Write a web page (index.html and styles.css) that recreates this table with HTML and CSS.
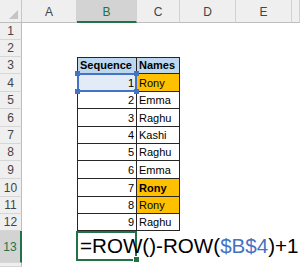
FILE: index.html
```html
<!DOCTYPE html>
<html>
<head>
<meta charset="utf-8">
<link rel="stylesheet" href="styles.css">
</head>
<body>
<div class="sheet">
  <div class="corner"><span class="tri"></span></div>
  <div class="ch">A</div><div class="ch sel">B</div><div class="ch">C</div><div class="ch">D</div><div class="ch">E</div><div class="ch"></div>

  <div class="rh">1</div><div></div><div></div><div></div><div></div><div></div><div></div>
  <div class="rh">2</div><div></div><div></div><div></div><div></div><div></div><div></div>
  <div class="rh">3</div><div></div><div class="t hd first">Sequence</div><div class="t hd">Names</div><div></div><div></div><div></div>
  <div class="rh">4</div><div></div><div class="t num first ref">1<i class="h tl"></i><i class="h tr"></i><i class="h bl"></i><i class="h br"></i></div><div class="t orange">Rony</div><div></div><div></div><div></div>
  <div class="rh">5</div><div></div><div class="t num first">2</div><div class="t">Emma</div><div></div><div></div><div></div>
  <div class="rh">6</div><div></div><div class="t num first">3</div><div class="t">Raghu</div><div></div><div></div><div></div>
  <div class="rh">7</div><div></div><div class="t num first">4</div><div class="t">Kashi</div><div></div><div></div><div></div>
  <div class="rh">8</div><div></div><div class="t num first">5</div><div class="t">Raghu</div><div></div><div></div><div></div>
  <div class="rh">9</div><div></div><div class="t num first">6</div><div class="t">Emma</div><div></div><div></div><div></div>
  <div class="rh">10</div><div></div><div class="t num first">7</div><div class="t orange bold">Rony</div><div></div><div></div><div></div>
  <div class="rh">11</div><div></div><div class="t num first">8</div><div class="t orange">Rony</div><div></div><div></div><div></div>
  <div class="rh">12</div><div></div><div class="t num first">9</div><div class="t">Raghu</div><div></div><div></div><div></div>
  <div class="rh sel">13</div><div></div><div class="active"><span class="formula">=ROW()-ROW(<span class="blue">$B$4</span>)+1</span><i class="gh"></i></div><div></div><div></div><div></div><div></div>
  <div class="rh"></div><div></div><div></div><div></div><div></div><div></div><div></div>
</div>
</body>
</html>
```
FILE: styles.css
```css
html, body {
  margin: 0;
  padding: 0;
  background: #ffffff;
}
.sheet {
  display: grid;
  grid-template-columns: 22px 55px 60px 43px 56px 56px 8px;
  grid-template-rows: 23px 17px 17px 17px 18px 17px 18px 17px 17px 18px 18px 17px 17px 32px 4px;
  width: 300px;
  height: 267px;
  overflow: hidden;
  font-family: "Liberation Sans", Arial, sans-serif;
}
.corner {
  background: #efefef;
  border-right: 1px solid #c6c6c6;
  border-bottom: 1px solid #bdbdbd;
  display: flex;
  justify-content: flex-end;
  align-items: flex-end;
  padding: 0 3px 3px 0;
}
.tri {
  width: 9px;
  height: 9px;
  background: #c4c4c4;
  clip-path: polygon(100% 0, 100% 100%, 0 100%);
}
.ch {
  background: #efefef;
  border-right: 1px solid #d2d2d2;
  border-bottom: 1px solid #bdbdbd;
  color: #444444;
  font-size: 12px;
  display: flex;
  align-items: center;
  justify-content: center;
  padding-top: 1px;
}
.ch.sel {
  background: #d3d3d3;
  border-bottom: 2px solid #217346;
  color: #217346;
  padding-top: 2px;
}
.rh {
  background: #efefef;
  border-right: 1px solid #bdbdbd;
  border-bottom: 1px solid #d6d6d6;
  color: #444444;
  font-size: 12px;
  display: flex;
  align-items: center;
  justify-content: center;
}
.rh.sel {
  background: #d3d3d3;
  border-right: 2px solid #217346;
  color: #217346;
}
.t {
  border-right: 1px solid #262626;
  border-bottom: 1px solid #262626;
  font-size: 11px;
  color: #000000;
  display: flex;
  align-items: flex-end;
  padding: 0 2px 1px 2px;
  line-height: 14px;
}
.t.first {
  border-left: 1px solid #262626;
}
.t.hd {
  border-top: 1px solid #262626;
  background: #bdd7ee;
  font-weight: bold;
}
.t.num {
  justify-content: flex-end;
}
.t.orange {
  background: #ffc000;
}
.t.bold {
  font-weight: bold;
}
.ref {
  position: relative;
  background: #e3ebf7;
}
.ref::before {
  content: "";
  position: absolute;
  left: -1px;
  top: -1px;
  right: -1px;
  bottom: -1px;
  border: 2px solid #4472c4;
  pointer-events: none;
}
.h {
  position: absolute;
  width: 5px;
  height: 5px;
  background: #4472c4;
}
.h.tl { left: -3px; top: -3px; }
.h.tr { right: -3px; top: -3px; }
.h.bl { left: -3px; bottom: -3px; }
.h.br { right: -3px; bottom: -3px; }
.active {
  position: relative;
  z-index: 2;
  padding: 3px 0 0 3px;
}
.active::before {
  content: "";
  position: absolute;
  left: -1px;
  top: 0;
  right: 0;
  bottom: 2px;
  border: 2px solid #217346;
}
.formula {
  position: relative;
  white-space: nowrap;
  font-size: 20.6px;
  line-height: 23px;
  color: #000000;
}
.blue {
  color: #4472c4;
}
.gh {
  position: absolute;
  right: -3px;
  bottom: 0;
  width: 5px;
  height: 5px;
  background: #217346;
  border: 1px solid #ffffff;
}
```
